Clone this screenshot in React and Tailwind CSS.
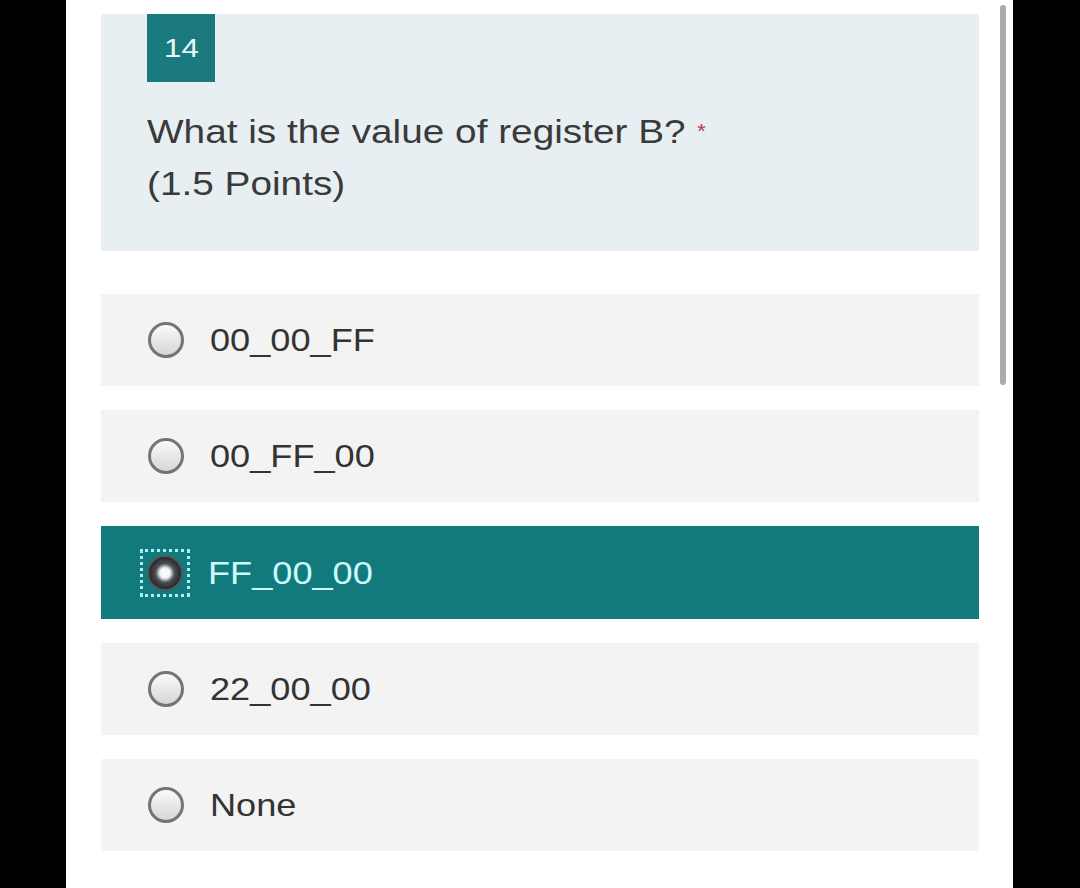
import { useState } from "react";

const options = ["00_00_FF", "00_FF_00", "FF_00_00", "22_00_00", "None"];

function Radio({ checked }) {
  if (checked) {
    return (
      <span className="w-[50px] h-[48px] border-[3px] border-dotted border-[#a9f1f3] flex items-center justify-center shrink-0">
        <span className="w-[36px] h-[36px] rounded-full border-2 border-[#50585a] bg-[radial-gradient(circle,#ffffff_0%,#f4f4f4_22%,#4a4f51_42%,#25292b_70%,#3d4345_100%)]" />
      </span>
    );
  }
  return (
    <span className="w-[36px] h-[36px] rounded-full border-[3px] border-[#747474] bg-gradient-to-b from-[#fafafa] to-[#d6d6d6] shrink-0" />
  );
}

export default function App() {
  const [selected, setSelected] = useState(2);

  return (
    <div className="w-[1080px] h-[888px] bg-black flex font-['Liberation_Sans',Arial,sans-serif]">
      <div className="ml-[66px] w-[947px] h-full bg-white relative">
        {/* scrollbar */}
        <div className="absolute left-[934px] top-[5px] w-[6px] h-[380px] bg-[#ababab] rounded-sm" />

        <div className="pl-[35px] pt-[14px] w-[913px] flex flex-col">
          {/* Question header */}
          <div className="bg-[#e8eff2] h-[237px] pl-[46px] flex flex-col">
            <div className="w-[68px] h-[68px] bg-[#1b7a7f] text-[#e6f7f7] text-[26px] flex items-center justify-center">
              <span className="inline-block scale-x-[1.2]">14</span>
            </div>
            <p className="mt-[23px] text-[#3a3a3a] text-[34px] leading-[52px] origin-left scale-x-[1.14]">
              What is the value of register B?
              <span className="text-[#c0394b] text-[20px] align-top ml-[10px]">*</span>
              <br />
              (1.5 Points)
            </p>
          </div>

          {/* Options */}
          <div className="mt-[43px] flex flex-col gap-[24px]">
            {options.map((opt, i) => {
              const isSel = i === selected;
              return (
                <button
                  key={opt}
                  onClick={() => setSelected(i)}
                  className={
                    isSel
                      ? "h-[93px] bg-[#127a7d] flex items-center pl-[39px] gap-[18px] text-left"
                      : "h-[92px] bg-[#f3f3f3] flex items-center pl-[47px] gap-[26px] text-left"
                  }
                >
                  <Radio checked={isSel} />
                  <span
                    className={
                      isSel
                        ? "inline-block origin-left scale-x-[1.13] text-[32px] text-[#cdfafb]"
                        : "inline-block origin-left scale-x-[1.13] text-[32px] text-[#333333]"
                    }
                  >
                    {opt}
                  </span>
                </button>
              );
            })}
          </div>
        </div>
      </div>
    </div>
  );
}
